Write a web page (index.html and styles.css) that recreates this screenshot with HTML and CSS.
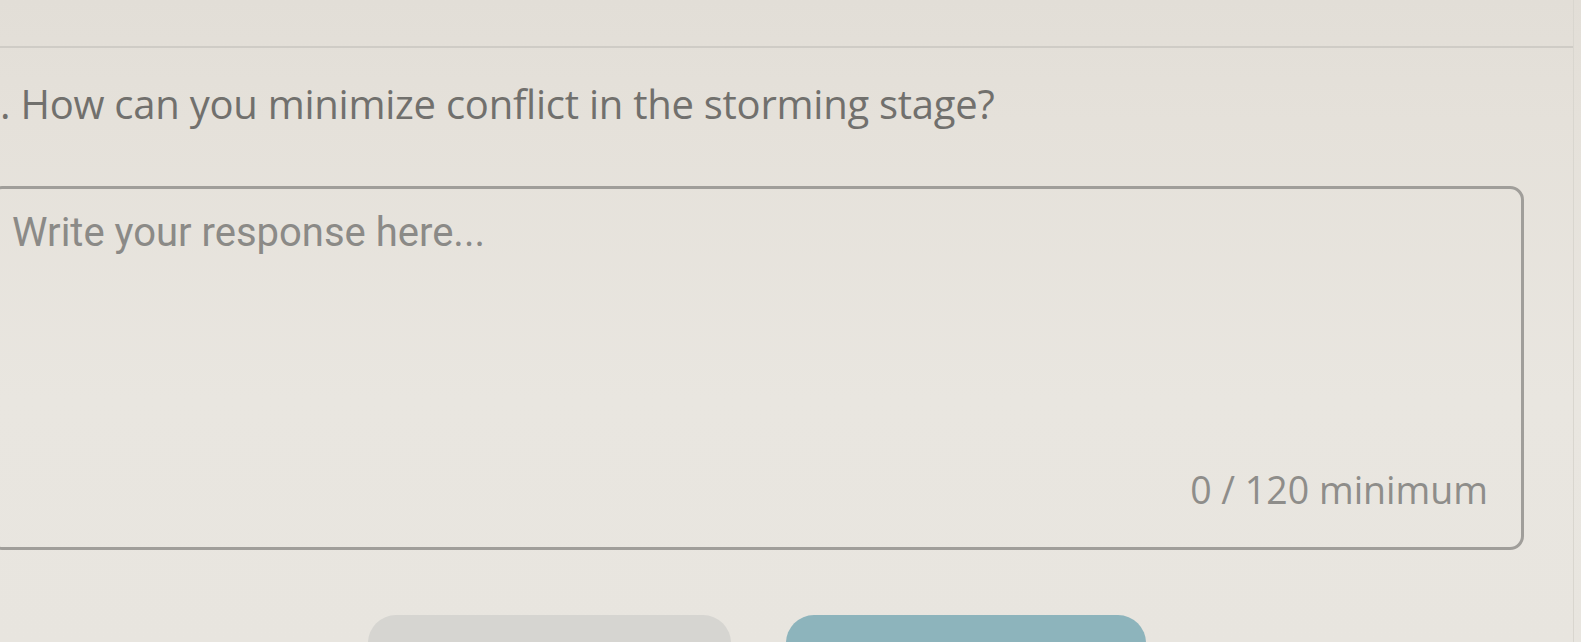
FILE: index.html
```html
<!DOCTYPE html>
<html lang="en">
<head>
<meta charset="utf-8">
<title>Storming stage – written response</title>
<link rel="stylesheet" href="styles.css">
</head>
<body>
  <main class="page">
    <div class="rule"></div>
    <section class="question">
      <h2 class="prompt">. How can you minimize conflict in the storming stage?</h2>
      <div class="response">
        <textarea class="response-input" placeholder="Write your response here..."></textarea>
        <div class="counter">0 / 120 minimum</div>
      </div>
      <div class="actions">
        <button class="btn btn-secondary" type="button"></button>
        <button class="btn btn-primary" type="button"></button>
      </div>
    </section>
  </main>
</body>
</html>
```

FILE: styles.css
```css
html, body {
  margin: 0;
  height: 100%;
  overflow: hidden;
}

body {
  background: linear-gradient(180deg, #e2ded7 0px, #e5e1da 120px, #e9e6e0 400px, #e8e5df 642px);
  font-family: "Open Sans", "Liberation Sans", sans-serif;
}

.page {
  width: 1574px;
  height: 100%;
  padding-top: 46px;
  box-sizing: border-box;
  border-right: 1px solid #d9d6cf;
}

.rule {
  height: 2px;
  background: #cfccc6;
}

.question {
  display: flex;
  flex-direction: column;
}

.prompt {
  margin: 28px 0 0 0;
  font-family: "Open Sans", "Liberation Sans", sans-serif;
  font-weight: 400;
  font-size: 40px;
  line-height: 56px;
  color: #71706d;
  letter-spacing: -0.25px;
}

.response {
  margin: 54px 0 0 -12px;
  width: 1536px;
  height: 364px;
  box-sizing: border-box;
  border: 3px solid #a09e9a;
  border-radius: 14px;
  display: flex;
  flex-direction: column;
}

.response-input {
  flex: 1;
  border: none;
  outline: none;
  resize: none;
  background: transparent;
  padding: 20px 21px 0 21px;
  font-family: Roboto, "Liberation Sans", sans-serif;
  font-size: 40px;
  line-height: 1.2;
  color: #555;
}

.response-input::placeholder {
  color: #8b8a87;
  opacity: 1;
}

.counter {
  align-self: flex-end;
  padding: 0 33px 35px 0;
  font-family: "Open Sans", "Liberation Sans", sans-serif;
  font-size: 37.5px;
  line-height: 1.2;
  color: #8e8d8a;
}

.actions {
  display: flex;
  gap: 55px;
  margin: 65px 0 0 368px;
}

.btn {
  height: 64px;
  border: none;
  border-radius: 28px;
  padding: 0;
}

.btn-secondary {
  width: 363px;
  background: #d6d5d1;
}

.btn-primary {
  width: 360px;
  background: #8db4bc;
}
```
